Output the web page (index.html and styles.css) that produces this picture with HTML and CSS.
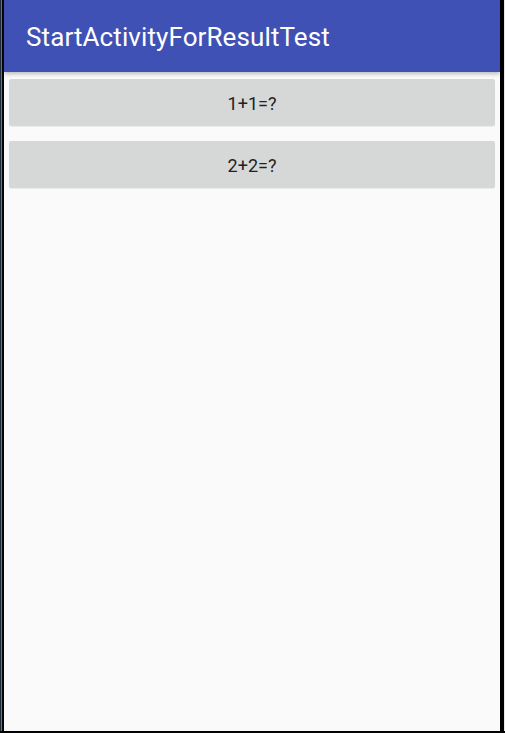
FILE: index.html
```html
<!DOCTYPE html>
<html>
<head>
<meta charset="utf-8">
<link rel="stylesheet" href="styles.css">
</head>
<body>
<div class="frame">
  <div class="edge-left"><span class="e1"></span><span class="e2"></span><span class="e3"></span></div>
  <div class="screen">
    <header class="appbar"><span class="title">StartActivityForResultTest</span></header>
    <main class="content">
      <button class="btn">1+1=?</button>
      <button class="btn">2+2=?</button>
    </main>
  </div>
  <div class="edge-right"><span class="r1"></span><span class="r2"></span></div>
</div>
<div class="edge-bottom"></div>
</body>
</html>
```
FILE: styles.css
```css
html, body {
  margin: 0;
  padding: 0;
  width: 505px;
  height: 733px;
  overflow: hidden;
  background: #000;
}
.frame {
  display: flex;
  height: 731px;
}
.edge-left {
  display: flex;
  width: 4px;
}
.edge-left span { display: block; height: 100%; }
.e1 { width: 1px; background: #1b2a3a; }
.e2 { width: 1px; background: #3d7fc4; }
.e3 { width: 2px; background: #050505; }
.edge-right {
  display: flex;
  width: 5px;
}
.edge-right span { display: block; height: 100%; }
.r1 { width: 4px; background: #000; }
.r2 { width: 1px; background: #e8e8e8; }
.screen {
  width: 496px;
  background: #fafafa;
  display: flex;
  flex-direction: column;
}
.appbar {
  height: 72px;
  background: #3f51b5;
  display: flex;
  align-items: center;
  padding-left: 22px;
  box-shadow: 0 2px 4px rgba(0,0,0,0.25);
  position: relative;
  z-index: 1;
  flex-shrink: 0;
}
.title {
  font-family: Roboto, "Liberation Sans", sans-serif;
  font-size: 26px;
  letter-spacing: 0.1px;
  color: #fff;
  margin-top: 2px;
}
.content {
  display: flex;
  flex-direction: column;
  gap: 15px;
  padding: 7px 5px 0 5px;
}
.btn {
  height: 47px;
  border: none;
  border-radius: 2px;
  background: #d6d7d7;
  box-shadow: 0 1px 1px rgba(0,0,0,0.06);
  font-family: Roboto, "Liberation Sans", sans-serif;
  font-size: 18px;
  color: #212121;
  padding: 2px 0 0 0;
  margin: 0;
}
.edge-bottom {
  height: 2px;
  background: #000;
}
```
